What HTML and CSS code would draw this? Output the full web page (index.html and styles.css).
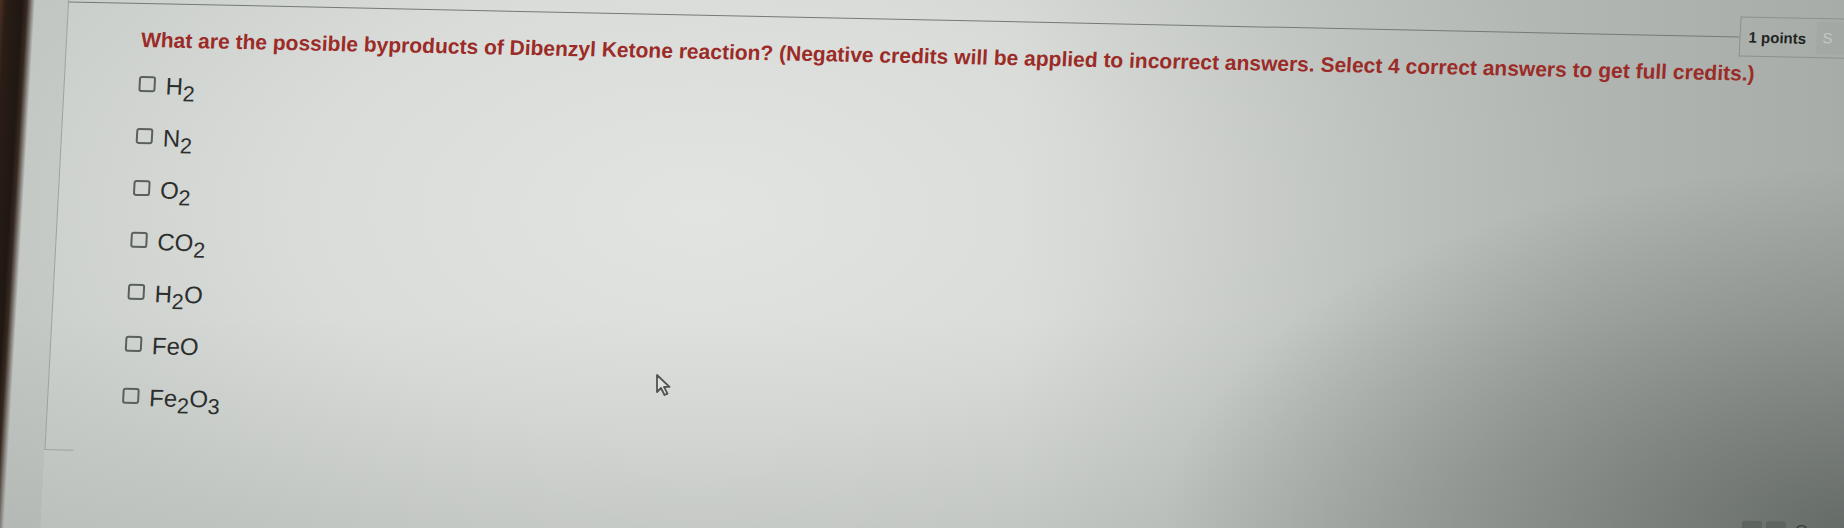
FILE: index.html
```html
<!DOCTYPE html>
<html lang="en">
<head>
<meta charset="utf-8">
<title>Question</title>
<link rel="stylesheet" href="styles.css">
</head>
<body>
<div class="screen">
  <div class="card">
    <div class="head">
      <div class="rule"></div>
      <div class="points"><span class="pts">1 points</span><span class="save">S</span></div>
    </div>
    <p class="question">What are the possible byproducts of Dibenzyl Ketone reaction? (Negative credits will be applied to incorrect answers. Select 4 correct answers to get full credits.)</p>
    <ul class="options">
      <li class="opt"><span class="box"></span><span class="label">H<sub>2</sub></span></li>
      <li class="opt"><span class="box"></span><span class="label">N<sub>2</sub></span></li>
      <li class="opt"><span class="box"></span><span class="label">O<sub>2</sub></span></li>
      <li class="opt"><span class="box"></span><span class="label">CO<sub>2</sub></span></li>
      <li class="opt"><span class="box"></span><span class="label">H<sub>2</sub>O</span></li>
      <li class="opt"><span class="box"></span><span class="label">FeO</span></li>
      <li class="opt"><span class="box"></span><span class="label">Fe<sub>2</sub>O<sub>3</sub></span></li>
    </ul>
  </div>
  <div class="footer"><span class="sq"></span><span class="sq"></span><span class="ftext">Q</span></div>
</div>
<svg class="cursor" width="18" height="24" viewBox="0 0 18 24" aria-hidden="true">
  <path d="M2 2 L2 19 L6 15 L9.5 22 L12.5 20.6 L9 13.8 L14.5 13.8 Z" fill="#dfe2df" stroke="#4f5451" stroke-width="1.8" stroke-linejoin="round"/>
</svg>
</body>
</html>
```

FILE: styles.css
```css
html, body {
  margin: 0;
  padding: 0;
}

body {
  width: 1844px;
  height: 528px;
  overflow: hidden;
  display: flow-root;
  font-family: "Liberation Sans", Arial, sans-serif;
  background-color: #d3d7d4;
  background-image:
    linear-gradient(93.4deg, #4a2c1c 0px, #25160f 6px, #1a100b 22px, #33241b 27px, #7d7670 31px, rgba(190, 194, 191, 0) 35px),
    radial-gradient(ellipse 680px 360px at 100% 100%, rgba(45, 52, 48, 0.5), rgba(45, 52, 48, 0)),
    linear-gradient(90deg, rgba(58, 66, 62, 0) 55%, rgba(58, 66, 62, 0.22) 100%),
    linear-gradient(180deg, rgba(58, 66, 62, 0) 60%, rgba(58, 66, 62, 0.08) 100%),
    radial-gradient(ellipse 900px 500px at 38% 40%, #e1e4e1 0%, #d9dcd9 45%, #cbcfcc 80%, #c6cac7 100%);
}

.screen {
  width: 1960px;
  min-height: 640px;
  margin-top: -30px;
  transform-origin: 0 30px;
  transform: rotate(1.2deg) skewX(-1.8deg);
  background-image: linear-gradient(90deg, rgba(100, 108, 104, 0.08) 68px, rgba(100, 108, 104, 0) 68px);
}

.card {
  position: relative;
  margin-left: 68px;
  height: 479px;
  box-sizing: border-box;
  padding-top: 6px;
  border-left: 1px solid #9ca29e;
}

.card::after {
  content: "";
  position: absolute;
  left: -1px;
  bottom: 0;
  width: 29px;
  border-bottom: 1px solid #9ca29e;
}

.head {
  display: flex;
  align-items: center;
  height: 48px;
}

.rule {
  flex: 1;
  height: 1px;
  background: #747a76;
}

.points {
  flex: none;
  width: 220px;
  height: 40px;
  box-sizing: border-box;
  display: flex;
  align-items: center;
  border: 1px solid #8c918d;
  border-right: none;
}

.pts {
  width: 68px;
  padding-left: 8px;
  font-size: 15px;
  font-weight: bold;
  color: #1f2421;
  white-space: nowrap;
}

.save {
  height: 32px;
  line-height: 32px;
  width: 110px;
  padding-left: 6px;
  background: #a3a8a4;
  color: #c4c8c5;
  font-size: 15px;
}

.question {
  margin: 1px 0 0 74px;
  font-size: 21px;
  line-height: 24px;
  font-weight: bold;
  color: #9b2b27;
  white-space: nowrap;
}

.options {
  list-style: none;
  margin: 6px 0 0 74px;
  padding: 0;
}

.opt {
  display: flex;
  align-items: center;
  gap: 10px;
  height: 52px;
  font-size: 24px;
  color: #2c2f2d;
}

.box {
  flex: none;
  width: 17px;
  height: 16px;
  box-sizing: border-box;
  border: 2px solid #5c605d;
  border-radius: 3px;
}

.label {
  line-height: 26px;
  padding-top: 3px;
}

.label sub {
  font-size: 0.9em;
  vertical-align: -0.3em;
  line-height: 0;
}

.footer {
  display: flex;
  align-items: flex-start;
  gap: 4px;
  margin: 35px 0 0 1768px;
}

.sq {
  width: 20px;
  height: 18px;
  border-radius: 2px;
  background: #5e6460;
}

.ftext {
  margin-left: 5px;
  font-size: 17px;
  color: #3a3f3c;
}

.cursor {
  position: absolute;
  left: 655px;
  top: 373px;
}
```
